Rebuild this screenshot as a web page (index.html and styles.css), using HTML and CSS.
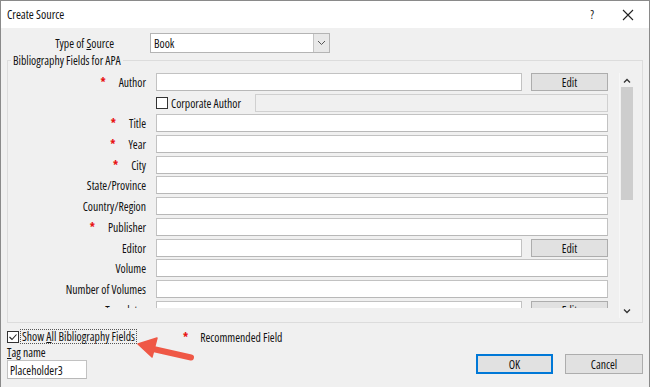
FILE: index.html
```html
<!DOCTYPE html>
<html>
<head>
<meta charset="utf-8">
<link rel="stylesheet" href="styles.css">
</head>
<body>
<div class="dialog">
  <div class="titlebar">
    <span class="title">Create Source</span>
    <div class="tb-btns">
      <span class="help">?</span>
      <svg class="close" width="12" height="12" viewBox="0 0 12 12"><path d="M1 1L11 11M11 1L1 11" stroke="#222" stroke-width="1.1" fill="none"/></svg>
    </div>
  </div>
  <div class="content">
    <div class="type-row">
      <span class="type-label">Type of <u>S</u>ource</span>
      <div class="select">
        <span class="select-val">Book</span>
        <span class="select-btn"><svg width="9" height="6" viewBox="0 0 9 6"><path d="M1 1L4.5 4.5L8 1" stroke="#555" stroke-width="1" fill="none"/></svg></span>
      </div>
    </div>
    <fieldset class="group">
      <legend>Bibliography Fields for APA</legend>
      <div class="group-body">
        <div class="viewport">
          <div class="row"><span class="lbl"><span class="star">*</span>Author</span><span class="inp"></span><span class="btn edit">Edit</span></div>
          <div class="row"><span class="lbl"></span><span class="cb"></span><span class="cb-text">Corporate Author</span><span class="inp disabled"></span></div>
          <div class="row"><span class="lbl"><span class="star">*</span>Title</span><span class="inp"></span></div>
          <div class="row"><span class="lbl"><span class="star">*</span>Year</span><span class="inp"></span></div>
          <div class="row"><span class="lbl"><span class="star">*</span>City</span><span class="inp"></span></div>
          <div class="row"><span class="lbl">State/Province</span><span class="inp"></span></div>
          <div class="row"><span class="lbl">Country/Region</span><span class="inp"></span></div>
          <div class="row"><span class="lbl"><span class="star">*</span>Publisher</span><span class="inp"></span></div>
          <div class="row"><span class="lbl">Editor</span><span class="inp"></span><span class="btn edit">Edit</span></div>
          <div class="row"><span class="lbl">Volume</span><span class="inp"></span></div>
          <div class="row"><span class="lbl">Number of Volumes</span><span class="inp"></span></div>
          <div class="row"><span class="lbl">Translator</span><span class="inp"></span><span class="btn edit">Edit</span></div>
        </div>
        <div class="scrollbar">
          <span class="sb-arrow"><svg width="8" height="5" viewBox="0 0 8 5"><path d="M1 4.5L4 1.5L7 4.5" stroke="#333" stroke-width="1.3" fill="none"/></svg></span>
          <div class="sb-thumb"></div>
          <div class="sb-track"></div>
          <span class="sb-arrow"><svg width="8" height="5" viewBox="0 0 8 5"><path d="M1 0.5L4 3.5L7 0.5" stroke="#333" stroke-width="1.3" fill="none"/></svg></span>
        </div>
      </div>
    </fieldset>
    <div class="footer">
      <div class="show-row">
        <span class="cb checked"><svg width="10" height="10" viewBox="0 0 10 10"><path d="M1.5 5L4 7.5L8.5 2.5" stroke="#222" stroke-width="1.1" fill="none"/></svg></span>
        <span class="focus-label">Show <u>A</u>ll Bibliography Fields</span>
        <span class="star foot-star">*</span>
        <span class="rec">Recommended Field</span>
      </div>
      <div class="tag-row">
        <div class="tag">
          <span class="tag-label"><u>T</u>ag name</span>
          <span class="inp tag-inp">Placeholder3</span>
        </div>
        <div class="buttons">
          <span class="btn ok">OK</span>
          <span class="btn cancel">Cancel</span>
        </div>
      </div>
    </div>
  </div>
  <svg class="arrow" width="650" height="387" viewBox="0 0 650 387">
    <line x1="151" y1="348.5" x2="191" y2="357.5" stroke="#ef5846" stroke-width="6" stroke-linecap="round"/>
    <polygon points="138,344 157,338 152,357" fill="#ef5846" stroke="#ef5846" stroke-width="1.5" stroke-linejoin="round"/>
  </svg>
</div>
</body>
</html>
```

FILE: styles.css
```css
* { box-sizing: border-box; }
html, body { margin: 0; padding: 0; }
body { width: 650px; height: 387px; overflow: hidden; background: #f0f0f0; }

.dialog {
  position: relative;
  width: 650px;
  height: 387px;
  border: 1px solid #8a8a8a;
  border-bottom: none;
  background: #f0f0f0;
  font-family: "Open Sans", "Noto Sans", sans-serif;
  font-stretch: 75%;
  font-size: 11.7px;
  color: #111;
  display: flex;
  flex-direction: column;
}

.titlebar {
  height: 27px;
  background: #fff;
  display: flex;
  align-items: center;
  justify-content: space-between;
  padding-left: 6px;
}
.title { font-size: 12px; color: #111; }
.tb-btns { display: flex; align-items: center; height: 100%; }
.help { font-size: 12px; width: 40px; text-align: center; margin-right: 2px; color: #222; }
.close { margin-right: 15px; margin-left: 8px; }

.content {
  flex: 1;
  padding: 5px 6px 0 6px;
  display: flex;
  flex-direction: column;
}

.type-row { display: flex; align-items: center; height: 20px; }
.type-label { width: 107px; text-align: right; margin-right: 36px; white-space: nowrap; }
.select {
  width: 180px; height: 20px;
  background: #fff;
  border: 1px solid #b4b4b4;
  display: flex; align-items: center;
}
.select-val { flex: 1; padding-left: 3px; }
.select-btn {
  width: 16px; height: 18px;
  background: #e8e8e8;
  border-left: 1px solid #c4c4c4;
  display: flex; align-items: center; justify-content: center;
}

.group {
  margin: 0;
  padding: 0 9px 4px 0;
  border: 1px solid #dcdcdc;
  width: 636px;
  min-width: 0;
}
.group legend {
  padding: 0 2px;
  margin-left: 3px;
  line-height: 14px;
}
.group-body {
  display: flex;
  align-items: flex-start;
  padding-top: 6px;
}
.viewport {
  width: 600px;
  height: 235px;
  overflow: hidden;
  display: flex;
  flex-direction: column;
  gap: 2.7px;
}
.row { display: flex; align-items: center; height: 18px; flex-shrink: 0; }
.lbl { width: 138px; text-align: right; margin-right: 10px; flex-shrink: 0; white-space: nowrap; }
.star { color: #e81010; margin-right: 13px; font-weight: bold; }
.inp {
  flex: 1;
  height: 18px;
  background: #fff;
  border: 1px solid #c2c2c2;
  border-bottom-color: #b8b8b8;
}
.inp.disabled { background: #f0f0f0; border-color: #d0d0d0; }
.btn {
  display: flex; align-items: center; justify-content: center;
  background: #e1e1e1;
  border: 1px solid #adadad;
  height: 18px;
}
.edit { width: 77px; margin-left: 9px; flex-shrink: 0; }

.cb {
  width: 12px; height: 12px;
  border: 1px solid #333;
  background: #fff;
  flex-shrink: 0;
  display: flex; align-items: center; justify-content: center;
}
.cb-text { margin-left: 3px; width: 84px; flex-shrink: 0; white-space: nowrap; }

.scrollbar {
  margin-left: 11px;
  width: 14px;
  height: 245px;
  display: flex;
  flex-direction: column;
  border-left: 1px solid #f7f7f7;
}
.sb-arrow { height: 14px; display: flex; align-items: center; justify-content: center; flex-shrink: 0; }
.sb-thumb { height: 113px; background: #cdcdcd; margin: 0 0 0 1px; flex-shrink: 0; }
.sb-track { flex: 1; }

.footer { display: flex; flex-direction: column; }
.show-row { display: flex; align-items: center; height: 15px; margin-top: 6px; }
.show-row .cb { margin-top: 1px; }
.focus-label {
  margin-left: 1px;
  border: 1px dotted #555;
  padding: 0 1px;
  height: 15px;
  line-height: 13px;
  white-space: nowrap;
}
.foot-star { margin-left: 46px; margin-right: 0; }
.rec { margin-left: 12px; }

.tag-row { display: flex; justify-content: space-between; align-items: flex-start; margin-top: 2px; }
.tag { display: flex; flex-direction: column; }
.tag-label { line-height: 13px; }
.tag-inp {
  flex: none;
  width: 80px; height: 19px;
  margin-top: 1px;
  padding-left: 2px;
  display: flex; align-items: center;
}
.buttons { display: flex; gap: 12px; margin-top: 8px; }
.ok { width: 77px; height: 20px; border: 1px solid #0078d7; box-shadow: inset 0 0 0 1px #0078d7; }
.cancel { width: 78px; height: 20px; }

.arrow { position: absolute; left: -1px; top: -1px; pointer-events: none; }
```
